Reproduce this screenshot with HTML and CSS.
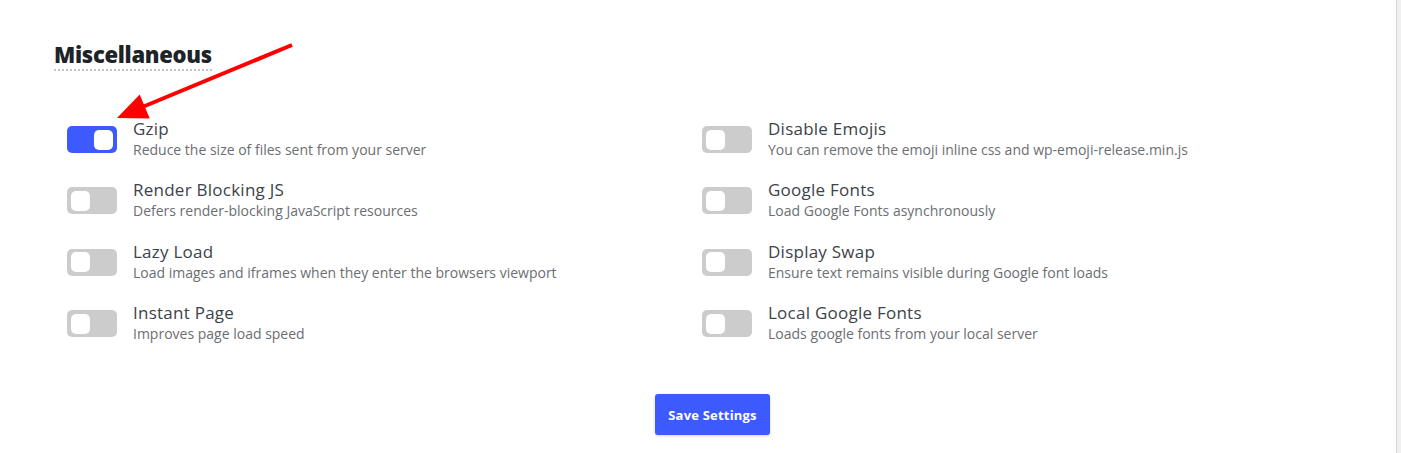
FILE: index.html
```html
<!DOCTYPE html>
<html lang="en">
<head>
<meta charset="utf-8">
<title>Miscellaneous</title>
<link rel="stylesheet" href="styles.css">
</head>
<body>
<div class="page">
  <main class="main">
    <h2 class="title"><span class="title-text">Miscellaneous</span></h2>
    <div class="options">
      <div class="option">
        <span class="toggle on"><span class="knob"></span></span>
        <div class="text"><div class="label">Gzip</div><div class="desc">Reduce the size of files sent from your server</div></div>
      </div>
      <div class="option">
        <span class="toggle"><span class="knob"></span></span>
        <div class="text"><div class="label">Disable Emojis</div><div class="desc">You can remove the emoji inline css and wp-emoji-release.min.js</div></div>
      </div>
      <div class="option">
        <span class="toggle"><span class="knob"></span></span>
        <div class="text"><div class="label">Render Blocking JS</div><div class="desc">Defers render-blocking JavaScript resources</div></div>
      </div>
      <div class="option">
        <span class="toggle"><span class="knob"></span></span>
        <div class="text"><div class="label">Google Fonts</div><div class="desc">Load Google Fonts asynchronously</div></div>
      </div>
      <div class="option">
        <span class="toggle"><span class="knob"></span></span>
        <div class="text"><div class="label">Lazy Load</div><div class="desc">Load images and iframes when they enter the browsers viewport</div></div>
      </div>
      <div class="option">
        <span class="toggle"><span class="knob"></span></span>
        <div class="text"><div class="label">Display Swap</div><div class="desc">Ensure text remains visible during Google font loads</div></div>
      </div>
      <div class="option">
        <span class="toggle"><span class="knob"></span></span>
        <div class="text"><div class="label">Instant Page</div><div class="desc">Improves page load speed</div></div>
      </div>
      <div class="option">
        <span class="toggle"><span class="knob"></span></span>
        <div class="text"><div class="label">Local Google Fonts</div><div class="desc">Loads google fonts from your local server</div></div>
      </div>
    </div>
    <div class="actions">
      <button class="save-btn" type="button">Save Settings</button>
    </div>
    <svg class="annotation" width="300" height="130" viewBox="0 0 300 130" aria-hidden="true">
      <line x1="292" y1="45" x2="140" y2="108" stroke="#ff0000" stroke-width="4"/>
      <polygon points="117,118 139.7,94.5 149.7,118.5" fill="#ff0000"/>
    </svg>
  </main>
  <aside class="side"></aside>
</div>
</body>
</html>
```

FILE: styles.css
```css
html, body {
  margin: 0;
  padding: 0;
  background: #ffffff;
}

body {
  font-family: "Open Sans", "Noto Sans", sans-serif;
  color: #3c434a;
}

.page {
  display: flex;
  min-height: 453px;
}

.main {
  position: relative;
  flex: 1;
  padding: 39px 25px 0 54px;
  border-right: 1px solid #dcd7ca;
  box-sizing: border-box;
}

.side {
  width: 4px;
  background: #f0f0f1;
}

.title {
  margin: 0;
  font-size: 22px;
  font-weight: 800;
  line-height: 30px;
  color: #1d2327;
  letter-spacing: -0.3px;
}

.title-text {
  display: inline-block;
  border-bottom: 2px dotted #c3c4c7;
}

.options {
  display: grid;
  grid-template-columns: 635px 635px;
  row-gap: 19.4px;
  margin: 47px 0 0 13px;
}

.option {
  display: flex;
  align-items: flex-start;
}

.toggle {
  display: flex;
  align-items: center;
  justify-content: flex-start;
  flex: none;
  width: 50px;
  height: 27px;
  margin-top: 8px;
  margin-right: 16px;
  padding: 0 4px;
  box-sizing: border-box;
  border-radius: 5px;
  background: #cccccc;
}

.toggle.on {
  justify-content: flex-end;
  background: #3d5afe;
}

.knob {
  width: 19px;
  height: 20px;
  border-radius: 5px;
  background: #ffffff;
}

.label {
  font-size: 17px;
  font-weight: 500;
  line-height: 22px;
  letter-spacing: 0.25px;
  color: #3c434a;
}

.desc {
  font-size: 14px;
  line-height: 20px;
  color: #6b6e72;
}

.actions {
  display: flex;
  justify-content: center;
  margin-top: 50px;
}

.save-btn {
  width: 115px;
  height: 41px;
  border: none;
  border-radius: 3px;
  background: #3d5afe;
  color: #ffffff;
  font-family: "Open Sans", "Noto Sans", sans-serif;
  font-size: 13px;
  font-weight: 700;
  letter-spacing: 0.2px;
  box-shadow: 0 1px 3px rgba(0, 0, 0, 0.18);
  cursor: pointer;
}

.annotation {
  position: absolute;
  left: 0;
  top: 0;
}
```
